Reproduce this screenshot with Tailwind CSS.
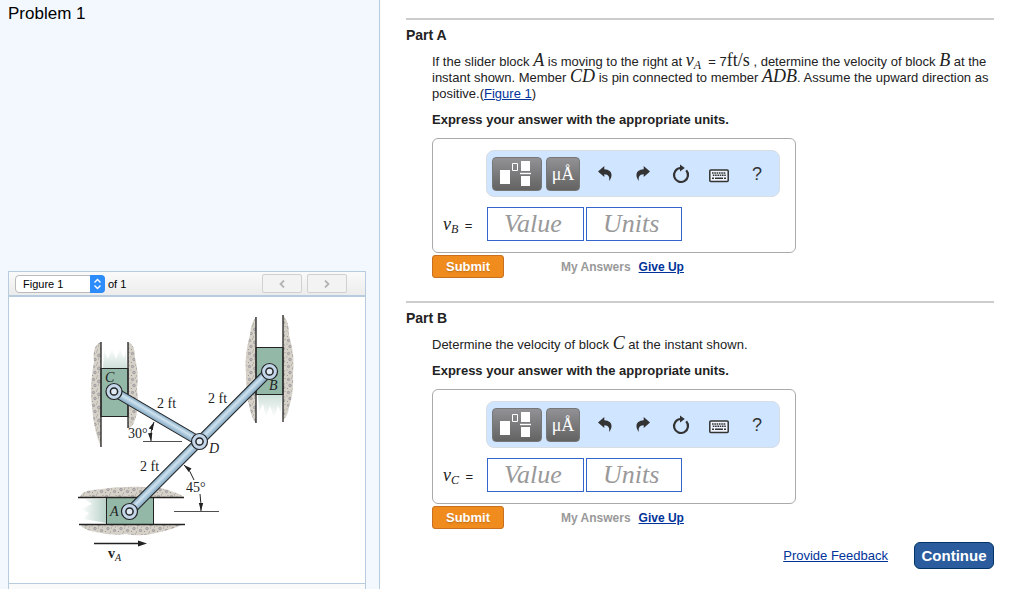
<!DOCTYPE html>
<html lang="en">
<head>
    <meta charset="UTF-8">
    <meta name="viewport" content="width=device-width, initial-scale=1.0">
    <title>Problem 1</title>
    <script src="https://cdn.jsdelivr.net/npm/@tailwindcss/browser@4"></script>
</head>
<body class="bg-white font-['Liberation_Sans',Arial,sans-serif] text-[13px] leading-4 text-[#222]">
    <!-- Toolbar icons -->
    <svg class="hidden">
        <symbol id="icon-template" viewBox="0 0 34 28">
            <path d="M0 10h10v14H0zM21 1h9v10h-9zM21 16h9v10h-9z" fill="#fff"/>
            <path d="M20 13.500h11" stroke="#fff" stroke-width="1.400"/>
            <path d="M12.500 3.500h5v7h-5z" fill="none" stroke="#fff"/>
        </symbol>
        <symbol id="icon-undo" viewBox="0 0 16 16">
            <path d="M1 5.500 7.300 0v3.300c4.700.2 7.500 2.700 7.200 6.200-.1 2-1 3.700-2.400 5.500.7-3.700-.3-6.600-4.800-6.700V11z" fill="#333"/>
        </symbol>
        <symbol id="icon-redo" viewBox="0 0 16 16">
            <path d="M15 5.500 8.700 0v3.300C4 3.500 1.200 6 1.500 9.500c.1 2 1 3.700 2.400 5.500-.7-3.700.3-6.600 4.800-6.700V11z" fill="#333"/>
        </symbol>
        <symbol id="icon-reset" viewBox="0 0 18 20">
            <path d="M14.200 6.300A7 7 0 1 1 8.500 4" fill="none" stroke="#333" stroke-width="2.200"/>
            <path d="M8 0.500 12.800 4 8 7.500z" fill="#333"/>
        </symbol>
        <symbol id="icon-keyboard" viewBox="0 0 20 14">
            <rect x="0.800" y="1" width="18.400" height="11.500" rx="1" fill="#eef5ff" stroke="#333" stroke-width="1.500"/>
            <path d="M3 4h14M3.800 6.300h13" stroke="#333" stroke-width="1.500" stroke-dasharray="1.600 .7"/>
            <path d="M3 9.200h2M6 9.200h8M15 9.200h2" stroke="#333" stroke-width="1.500"/>
        </symbol>
    </svg>

    <div class="flex h-screen overflow-hidden">
        <aside class="flex w-[380px] shrink-0 flex-col justify-between border-r border-[#b8cce0] bg-[#f3f8ff] pl-2 pr-[13px]">
            <h1 class="pt-1 text-[17px] leading-5 text-black">Problem 1</h1>

            <section class="border border-b-0 border-[#b8cce0] bg-white">
                <div class="flex h-[25px] items-center border-b-2 border-[#b8cce0] bg-linear-to-b from-[#fafafa] to-[#ececec] pl-1.5 pr-[18px] text-[11px] text-black">
                    <div class="relative">
                        <select id="figure" aria-label="Figure" class="block h-[18px] w-[90px] appearance-none rounded border border-[#bbb] bg-white pl-[7px] leading-4">
                            <option>Figure 1</option>
                        </select>
                        <svg class="pointer-events-none absolute right-0 top-0 h-[18px] w-[15px]" viewBox="0 0 15 18">
                            <path d="M0 0h11a4 4 0 0 1 4 4v10a4 4 0 0 1-4 4H0z" fill="#2d8cfb"/>
                            <path d="M4.500 7.500l3-3 3 3M4.500 10.500l3 3 3-3" fill="none" stroke="#fff" stroke-width="1.400"/>
                        </svg>
                    </div>
                    <label for="figure" class="ml-[3px]">of 1</label>
                    <div class="ml-auto flex gap-[5px]">
                        <button aria-label="Previous figure" class="flex h-[19px] w-10 items-center justify-center rounded-xs border border-[#d0d0d0] bg-[#f3f3f3]">
                            <svg class="h-2 w-2" viewBox="0 0 8 8"><path d="M6 0.500 2.500 4 6 7.500" fill="none" stroke="#b3b3b3" stroke-width="1.800"/></svg>
                        </button>
                        <button aria-label="Next figure" class="flex h-[19px] w-10 items-center justify-center rounded-xs border border-[#d0d0d0] bg-[#f3f3f3]">
                            <svg class="h-2 w-2" viewBox="0 0 8 8"><path d="M2 0.500 5.500 4 2 7.500" fill="none" stroke="#b3b3b3" stroke-width="1.800"/></svg>
                        </button>
                    </div>
                </div>

                <!-- Linkage: members ADB and CD, blocks A, B, C -->
                <svg class="block w-full" viewBox="9 297 356 286" font-family="'Liberation Serif', serif" font-size="14" fill="#222">
                    <defs>
                        <pattern id="stone" width="13" height="13" patternUnits="userSpaceOnUse">
                            <rect width="13" height="13" fill="#d7d2c9"/>
                            <g fill="#bbb8ba" stroke="#8d898b" stroke-width=".6">
                                <circle cx="2.500" cy="2.500" r="1.200"/><circle cx="8" cy="4.500" r="1.500"/><circle cx="4" cy="8.500" r="1.300"/><circle cx="10.500" cy="10.500" r="1.200"/>
                            </g>
                            <path d="M5 1h1M11.500 1.500h1M.5 6h1M7 8h1M11 7h1M6 12h1M1 11.500h1" stroke="#8b8680" stroke-width=".8"/>
                        </pattern>
                        <linearGradient id="rod" x1="0" y1="0" x2="0" y2="1">
                            <stop offset="0" stop-color="#7ea3bd"/>
                            <stop offset=".4" stop-color="#cfe3f0"/>
                            <stop offset="1" stop-color="#7fa5c0"/>
                        </linearGradient>
                        <linearGradient id="trail-up" x1="0" y1="0" x2="0" y2="1">
                            <stop offset="0" stop-color="#fff"/><stop offset="1" stop-color="#cfe0d9"/>
                        </linearGradient>
                        <linearGradient id="trail-down" x1="0" y1="1" x2="0" y2="0">
                            <stop offset="0" stop-color="#fff"/><stop offset="1" stop-color="#cfe0d9"/>
                        </linearGradient>
                        <linearGradient id="trail-left">
                            <stop offset="0" stop-color="#fff"/><stop offset="1" stop-color="#b9d2c8"/>
                        </linearGradient>
                        <filter id="soft"><feGaussianBlur stdDeviation=".7"/></filter>
                        <marker id="tip" viewBox="0 0 8 6" refX="8" refY="3" markerWidth="8" markerHeight="6" markerUnits="userSpaceOnUse" orient="auto-start-reverse">
                            <path d="M0 .8 8 3 0 5.200z" fill="#222"/>
                        </marker>
                        <g id="pin">
                            <circle r="8" fill="#c3d6ea" stroke="#222" stroke-width="1.200"/>
                            <circle r="3.600" fill="#dfeaf5" stroke="#222" stroke-width="1.500"/>
                        </g>
                    </defs>

                    <g fill="url(#stone)" filter="url(#soft)">
                        <path d="M101 342q-9 3-7 20-5 25-2 45 2 25 9 40z"/>
                        <path d="M128 342q7 2 7 16 4 15 2 30 2 25-3 34-2 6-6 6z"/>
                        <path d="M256 317q-5 5-6 18-6 20-4 40 0 20 4 34 2 10 6 14z"/>
                        <path d="M283 315q6 6 6 20 6 20 4 38 1 20-4 34-1 9-6 13z"/>
                        <path d="M80 497q1-6 14-7 25-4 50-3 20 0 29 5 8 2 10 5z"/>
                        <path d="M80 524q3 6 16 8 15 4 30 2 15 3 30-1 15-3 28-9z"/>
                    </g>
                    <g filter="url(#soft)">
                        <path d="M103 368l1-18 4 9 4-11 4 11 4-10 4 9 2-9 1 19z" fill="url(#trail-up)"/>
                        <path d="M258 395l1 17 4-8 3 13 4-11 4 12 4-12 3 7 1-18z" fill="url(#trail-down)"/>
                        <path d="M106 499H84l8 5-11 5 8 4-6 6 23 4z" fill="url(#trail-left)"/>
                    </g>

                    <g fill="#93b8a7" stroke="#222">
                        <rect x="101" y="368.500" width="27" height="48"/>
                        <rect x="256" y="347.500" width="27" height="47"/>
                        <rect x="106.500" y="497.500" width="47" height="27"/>
                    </g>
                    <path d="M101 342v105M128 342v86M256 317v106M283 315v107M78 497.500h106M79 524.500h106" stroke="#222" stroke-width="1.300"/>

                    <text x="105" y="382" font-style="italic">C</text>
                    <text x="269" y="390" font-style="italic">B</text>
                    <text x="110" y="516" font-style="italic">A</text>

                    <g fill="url(#rod)" stroke="#222">
                        <rect x="0" y="-4.500" width="99" height="9" transform="translate(114 391.500) rotate(30.300)"/>
                        <rect x="0" y="-4.500" width="198" height="9" transform="translate(129.500 511.500) rotate(-45.100)"/>
                    </g>
                    <use href="#pin" x="114" y="391.500"/>
                    <use href="#pin" x="269.500" y="371.500"/>
                    <use href="#pin" x="199.500" y="441.500"/>
                    <use href="#pin" x="129.500" y="511.500"/>

                    <path d="M143 441.500h39M174 511.500h45" stroke="#222" stroke-width=".8"/>
                    <g fill="none" stroke="#222">
                        <path d="M154 422q-4 9-3 19" marker-start="url(#tip)" marker-end="url(#tip)"/>
                        <path d="M184 465q7 6 10 15" marker-start="url(#tip)"/>
                        <path d="M200 494q1 8 1 17" marker-end="url(#tip)"/>
                        <path d="M94 543.500h48" stroke-width="1.400"/>
                    </g>
                    <path d="M138 540.500l9 3-9 3z"/>

                    <text x="157" y="408">2 ft</text>
                    <text x="208" y="403">2 ft</text>
                    <text x="140" y="471">2 ft</text>
                    <text x="128" y="438">30°</text>
                    <text x="186" y="492">45°</text>
                    <text x="209" y="453" font-style="italic">D</text>
                    <text x="108" y="558" font-weight="bold">v</text>
                    <text x="115" y="561" font-size="10" font-style="italic">A</text>
                </svg>
                <div class="h-1.5 border-t border-[#b8cce0] bg-[#fafafa]"></div>
            </section>
        </aside>

        <main class="min-w-0 flex-1 pl-[26px] pr-[25px] pt-[18px]">
            <section class="border-t-2 border-[#ccc] pt-[5px]">
                <h2 class="text-sm font-bold leading-5">Part A</h2>
                <div class="mt-[9px] pl-[26px]">
                    <p>If the slider block <i class="font-['Liberation_Serif',serif] text-lg leading-0">A</i> is moving to the right at <i class="font-['Liberation_Serif',serif] text-lg leading-0">v<sub class="text-xs leading-0">A</sub></i>&nbsp; = 7<span class="font-['Liberation_Serif',serif] text-lg leading-0">ft/s</span> , determine the velocity of block <i class="font-['Liberation_Serif',serif] text-lg leading-0">B</i> at the instant shown. Member <i class="font-['Liberation_Serif',serif] text-lg leading-0">CD</i> is pin connected to member <i class="font-['Liberation_Serif',serif] text-lg leading-0">ADB</i>. Assume the upward direction as positive.(<a href="#figure" class="text-[#003399] underline">Figure 1</a>)</p>
                    <p class="mt-2.5 font-bold">Express your answer with the appropriate units.</p>
                    <div class="mt-2.5 w-[364px] rounded-md border border-[#aaa] pb-[11px] pl-[10px] pr-[15px] pt-[11px]">
                        <div class="ml-[43px] flex h-[47px] items-center rounded-lg border border-[#d8dde4] bg-[#d0e5ff] pl-[5px]">
                            <button aria-label="Templates" class="flex h-[34px] w-[50px] items-center rounded border border-[#777] bg-linear-to-b from-[#929296] to-[#636363] pl-[7px]"><svg class="h-7 w-[34px]"><use href="#icon-template"/></svg></button>
                            <button aria-label="Symbols" class="ml-1 mr-1.5 h-[34px] w-[34px] rounded border border-[#777] bg-linear-to-b from-[#929296] to-[#636363] font-['Liberation_Serif',serif] text-lg leading-8 text-white">μÅ</button>
                            <button aria-label="Undo" class="flex w-[38px] justify-center"><svg class="size-4"><use href="#icon-undo"/></svg></button>
                            <button aria-label="Redo" class="flex w-[38px] justify-center"><svg class="size-4"><use href="#icon-redo"/></svg></button>
                            <button aria-label="Reset" class="flex w-[38px] justify-center"><svg class="h-5 w-[18px]"><use href="#icon-reset"/></svg></button>
                            <button aria-label="Keyboard" class="flex w-[38px] justify-center"><svg class="mt-1 h-3.5 w-5"><use href="#icon-keyboard"/></svg></button>
                            <button aria-label="Help" class="w-[38px] text-lg text-[#333]">?</button>
                        </div>
                        <div class="mt-2.5 flex items-center font-['Liberation_Serif',serif]">
                            <label for="value-a" class="w-11 text-lg leading-4"><i>v<sub class="text-xs leading-0">B</sub></i> <span class="ml-0.5 font-['Liberation_Sans',Arial,sans-serif] text-[13px] leading-0">=</span></label>
                            <input id="value-a" type="text" placeholder="Value" class="h-[34px] w-[97px] border border-[#3366cc] pl-4 text-[26px] italic placeholder:text-[#999]">
                            <input type="text" aria-label="Units" placeholder="Units" class="ml-0.5 h-[34px] w-24 border border-[#3366cc] pl-4 text-[26px] italic placeholder:text-[#999]">
                        </div>
                    </div>
                    <div class="mt-0.5 flex items-center text-xs font-bold">
                        <button class="h-[23px] w-[72px] rounded-[3px] border border-[#c8701e] bg-[#f08c1e] text-[13px] text-white text-shadow-sm">Submit</button>
                        <span class="ml-[57px] text-[#999]">My Answers</span>
                        <a href="#" class="ml-2 text-[#003399] underline">Give Up</a>
                    </div>
                </div>
            </section>

            <section class="mt-[23px] border-t-2 border-[#ccc] pt-[5px]">
                <h2 class="text-sm font-bold leading-5">Part B</h2>
                <div class="mt-[9px] pl-[26px]">
                    <p>Determine the velocity of block <i class="font-['Liberation_Serif',serif] text-lg leading-0">C</i> at the instant shown.</p>
                    <p class="mt-2.5 font-bold">Express your answer with the appropriate units.</p>
                    <div class="mt-2.5 w-[364px] rounded-md border border-[#aaa] pb-[11px] pl-[10px] pr-[15px] pt-[11px]">
                        <div class="ml-[43px] flex h-[47px] items-center rounded-lg border border-[#d8dde4] bg-[#d0e5ff] pl-[5px]">
                            <button aria-label="Templates" class="flex h-[34px] w-[50px] items-center rounded border border-[#777] bg-linear-to-b from-[#929296] to-[#636363] pl-[7px]"><svg class="h-7 w-[34px]"><use href="#icon-template"/></svg></button>
                            <button aria-label="Symbols" class="ml-1 mr-1.5 h-[34px] w-[34px] rounded border border-[#777] bg-linear-to-b from-[#929296] to-[#636363] font-['Liberation_Serif',serif] text-lg leading-8 text-white">μÅ</button>
                            <button aria-label="Undo" class="flex w-[38px] justify-center"><svg class="size-4"><use href="#icon-undo"/></svg></button>
                            <button aria-label="Redo" class="flex w-[38px] justify-center"><svg class="size-4"><use href="#icon-redo"/></svg></button>
                            <button aria-label="Reset" class="flex w-[38px] justify-center"><svg class="h-5 w-[18px]"><use href="#icon-reset"/></svg></button>
                            <button aria-label="Keyboard" class="flex w-[38px] justify-center"><svg class="mt-1 h-3.5 w-5"><use href="#icon-keyboard"/></svg></button>
                            <button aria-label="Help" class="w-[38px] text-lg text-[#333]">?</button>
                        </div>
                        <div class="mt-2.5 flex items-center font-['Liberation_Serif',serif]">
                            <label for="value-b" class="w-11 text-lg leading-4"><i>v<sub class="text-xs leading-0">C</sub></i> <span class="ml-0.5 font-['Liberation_Sans',Arial,sans-serif] text-[13px] leading-0">=</span></label>
                            <input id="value-b" type="text" placeholder="Value" class="h-[34px] w-[97px] border border-[#3366cc] pl-4 text-[26px] italic placeholder:text-[#999]">
                            <input type="text" aria-label="Units" placeholder="Units" class="ml-0.5 h-[34px] w-24 border border-[#3366cc] pl-4 text-[26px] italic placeholder:text-[#999]">
                        </div>
                    </div>
                    <div class="mt-0.5 flex items-center text-xs font-bold">
                        <button class="h-[23px] w-[72px] rounded-[3px] border border-[#c8701e] bg-[#f08c1e] text-[13px] text-white text-shadow-sm">Submit</button>
                        <span class="ml-[57px] text-[#999]">My Answers</span>
                        <a href="#" class="ml-2 text-[#003399] underline">Give Up</a>
                    </div>
                </div>
            </section>

            <div class="mt-[13px] flex items-center justify-end gap-[26px]">
                <a href="#" class="text-[#003399] underline">Provide Feedback</a>
                <button class="h-[27px] w-20 rounded-md border border-[#003366] bg-[#2b5c9e] text-[15px] font-bold text-white">Continue</button>
            </div>
        </main>
    </div>
</body>
</html>
